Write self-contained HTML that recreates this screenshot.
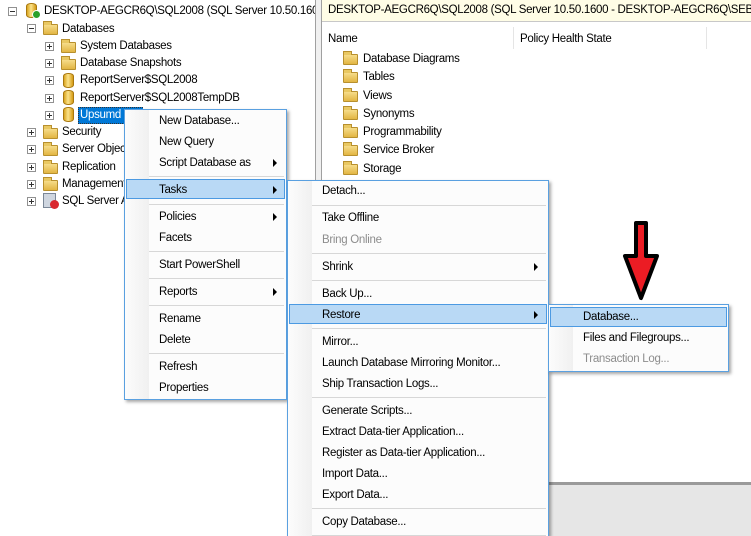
<!DOCTYPE html>
<html><head><meta charset="utf-8"><style>
*{margin:0;padding:0;box-sizing:border-box}
body{width:751px;height:536px;overflow:hidden;background:#fff;font-family:"Liberation Sans",sans-serif;font-size:11.5px;letter-spacing:-0.3px;color:#000;position:relative}
.a{position:absolute;white-space:nowrap}
.t{position:absolute;white-space:nowrap;line-height:16px}
.exp{position:absolute;width:9px;height:9px;border:1px solid #919191;background:#fff}
.exp:before{content:"";position:absolute;left:1px;top:3px;width:5px;height:1px;background:#333}
.exp.p:after{content:"";position:absolute;left:3px;top:1px;width:1px;height:5px;background:#333}
.fold{position:absolute;width:15px;height:11px;background:linear-gradient(#f6dc8a,#e2b643);border:1px solid #b8902e;border-radius:1px}
.fold:before{content:"";position:absolute;left:-1px;top:-4px;width:7px;height:3px;background:#e9c862;border:1px solid #b8902e;border-bottom:none}
.db{position:absolute;width:11px;height:15px;background:linear-gradient(90deg,#d9a520,#fbe28a 45%,#d49b14);border:1px solid #a9780f;border-radius:5px/3px}
.menu{position:absolute;background:#fcfcfc;border:1px solid #5aa0e0;box-shadow:2px 2px 3px rgba(0,0,0,.35);overflow:hidden}
.gut{position:absolute;left:0;top:0;bottom:0;width:24px;background:linear-gradient(90deg,#fcfcfc,#f0f0f0)}
.mi{position:absolute;left:34px;white-space:nowrap;line-height:16px}
.sep{position:absolute;left:24px;right:2px;height:1px;background:#d7d7d7}
.hl{position:absolute;left:1px;right:1px;height:20px;background:#b9d9f5;border:1px solid #4c9ae2}
.arr{position:absolute;width:0;height:0;border-top:4px solid transparent;border-bottom:4px solid transparent;border-left:4px solid #000}
.dis{color:#8d8d8d}
</style></head><body>
<div class="a" style="left:315px;top:0;width:7px;height:536px;background:#f0f0f0;border-left:1px solid #a0a0a0;border-right:1px solid #a0a0a0"></div>
<div class="exp" style="left:8px;top:7px"></div>
<div class="db" style="left:26px;top:3px"></div>
<div class="a" style="left:32px;top:10px;width:9px;height:9px;border-radius:50%;background:#2aa12a;border:1px solid #fff"></div>
<div class="a" style="left:44px;top:3px;width:271px;height:16px;overflow:hidden"><div class="t" style="left:0;top:0">DESKTOP-AEGCR6Q\SQL2008 (SQL Server 10.50.1600 - DESKTOP</div></div>
<div class="exp" style="left:27px;top:24px"></div>
<div class="fold" style="left:43px;top:24px"></div>
<div class="t" style="left:62px;top:21px">Databases</div>
<div class="exp p" style="left:45px;top:42px"></div><div class="fold" style="left:61px;top:42px"></div><div class="t" style="left:80px;top:38px">System Databases</div>
<div class="exp p" style="left:45px;top:59px"></div><div class="fold" style="left:61px;top:59px"></div><div class="t" style="left:80px;top:55px">Database Snapshots</div>
<div class="exp p" style="left:45px;top:76px"></div><div class="db" style="left:63px;top:73px"></div><div class="t" style="left:80px;top:72px">ReportServer$SQL2008</div>
<div class="exp p" style="left:45px;top:94px"></div><div class="db" style="left:63px;top:90px"></div><div class="t" style="left:80px;top:90px">ReportServer$SQL2008TempDB</div>
<div class="exp p" style="left:45px;top:111px"></div><div class="db" style="left:63px;top:107px"></div>
<div class="a" style="left:78px;top:107px;width:65px;height:17px;background:#0078d7;border:1px dotted #333"></div><div class="t" style="left:80px;top:107px;color:#fff">Upsumd</div>
<div class="exp p" style="left:27px;top:128px"></div><div class="fold" style="left:43px;top:128px"></div><div class="t" style="left:62px;top:124px">Security</div>
<div class="exp p" style="left:27px;top:145px"></div><div class="fold" style="left:43px;top:145px"></div><div class="t" style="left:62px;top:141px">Server Objects</div>
<div class="exp p" style="left:27px;top:163px"></div><div class="fold" style="left:43px;top:163px"></div><div class="t" style="left:62px;top:159px">Replication</div>
<div class="exp p" style="left:27px;top:180px"></div><div class="fold" style="left:43px;top:180px"></div><div class="t" style="left:62px;top:176px">Management</div>
<div class="exp p" style="left:27px;top:197px"></div><div class="a" style="left:43px;top:193px;width:13px;height:15px;background:#cfd6e0;border:1px solid #7b8797"></div><div class="a" style="left:50px;top:200px;width:9px;height:9px;border-radius:50%;background:#d9282f"></div><div class="t" style="left:62px;top:193px">SQL Server Agent</div>
<div class="a" style="left:322px;top:0;width:429px;height:22px;background:#fffde6;border-bottom:1px solid #c8c8c8;overflow:hidden"><div class="t" style="left:6px;top:2px">DESKTOP-AEGCR6Q\SQL2008 (SQL Server 10.50.1600 - DESKTOP-AEGCR6Q\SEBASTIAN)</div></div>
<div class="t" style="left:328px;top:31px">Name</div>
<div class="a" style="left:513px;top:27px;width:1px;height:22px;background:#e5e5e5"></div>
<div class="t" style="left:520px;top:31px">Policy Health State</div>
<div class="a" style="left:706px;top:27px;width:1px;height:22px;background:#e5e5e5"></div>
<div class="fold" style="left:343px;top:54px"></div><div class="t" style="left:363px;top:51px">Database Diagrams</div>
<div class="fold" style="left:343px;top:72px"></div><div class="t" style="left:363px;top:69px">Tables</div>
<div class="fold" style="left:343px;top:91px"></div><div class="t" style="left:363px;top:88px">Views</div>
<div class="fold" style="left:343px;top:109px"></div><div class="t" style="left:363px;top:106px">Synonyms</div>
<div class="fold" style="left:343px;top:127px"></div><div class="t" style="left:363px;top:124px">Programmability</div>
<div class="fold" style="left:343px;top:145px"></div><div class="t" style="left:363px;top:142px">Service Broker</div>
<div class="fold" style="left:343px;top:164px"></div><div class="t" style="left:363px;top:161px">Storage</div>
<div class="a" style="left:322px;top:482px;width:429px;height:54px;background:#e6e6e6;border-top:3px solid #9a9a9a"></div>
<div class="menu" style="left:124px;top:109px;width:163px;height:291px">
<div class="gut"></div>
<div class="mi" style="top:3px">New Database...</div>
<div class="mi" style="top:24px">New Query</div>
<div class="mi" style="top:45px">Script Database as</div><div class="arr" style="left:148px;top:49px"></div>
<div class="sep" style="top:66px"></div>
<div class="hl" style="top:69px"></div>
<div class="mi" style="top:72px">Tasks</div><div class="arr" style="left:148px;top:76px"></div>
<div class="sep" style="top:94px"></div>
<div class="mi" style="top:99px">Policies</div><div class="arr" style="left:148px;top:103px"></div>
<div class="mi" style="top:120px">Facets</div>
<div class="sep" style="top:141px"></div>
<div class="mi" style="top:147px">Start PowerShell</div>
<div class="sep" style="top:168px"></div>
<div class="mi" style="top:174px">Reports</div><div class="arr" style="left:148px;top:178px"></div>
<div class="sep" style="top:195px"></div>
<div class="mi" style="top:201px">Rename</div>
<div class="mi" style="top:222px">Delete</div>
<div class="sep" style="top:243px"></div>
<div class="mi" style="top:249px">Refresh</div>
<div class="mi" style="top:270px">Properties</div>
</div>
<div class="menu" style="left:287px;top:180px;width:262px;height:356px;border-bottom:none">
<div class="gut"></div>
<div class="mi" style="top:2px">Detach...</div>
<div class="sep" style="top:24px"></div>
<div class="mi" style="top:29px">Take Offline</div>
<div class="mi dis" style="top:51px">Bring Online</div>
<div class="sep" style="top:72px"></div>
<div class="mi" style="top:78px">Shrink</div><div class="arr" style="left:246px;top:82px"></div>
<div class="sep" style="top:99px"></div>
<div class="mi" style="top:105px">Back Up...</div>
<div class="hl" style="top:123px"></div>
<div class="mi" style="top:126px">Restore</div><div class="arr" style="left:246px;top:130px"></div>
<div class="sep" style="top:147px"></div>
<div class="mi" style="top:153px">Mirror...</div>
<div class="mi" style="top:174px">Launch Database Mirroring Monitor...</div>
<div class="mi" style="top:195px">Ship Transaction Logs...</div>
<div class="sep" style="top:216px"></div>
<div class="mi" style="top:222px">Generate Scripts...</div>
<div class="mi" style="top:243px">Extract Data-tier Application...</div>
<div class="mi" style="top:264px">Register as Data-tier Application...</div>
<div class="mi" style="top:285px">Import Data...</div>
<div class="mi" style="top:306px">Export Data...</div>
<div class="sep" style="top:327px"></div>
<div class="mi" style="top:333px">Copy Database...</div>
<div class="sep" style="top:354px"></div>
</div>
<div class="menu" style="left:548px;top:304px;width:181px;height:68px">
<div class="gut"></div>
<div class="hl" style="top:2px"></div>
<div class="mi" style="top:4px">Database...</div>
<div class="mi" style="top:25px">Files and Filegroups...</div>
<div class="mi dis" style="top:46px">Transaction Log...</div>
</div>
<svg class="a" style="left:620px;top:218px" width="46" height="88" viewBox="0 0 46 88">
<path d="M16 5 H26 V38 H37 L21 80 L5 38 H16 Z" fill="#ec1c24" stroke="#000" stroke-width="4" stroke-linejoin="round"/>
</svg>
</body></html>
